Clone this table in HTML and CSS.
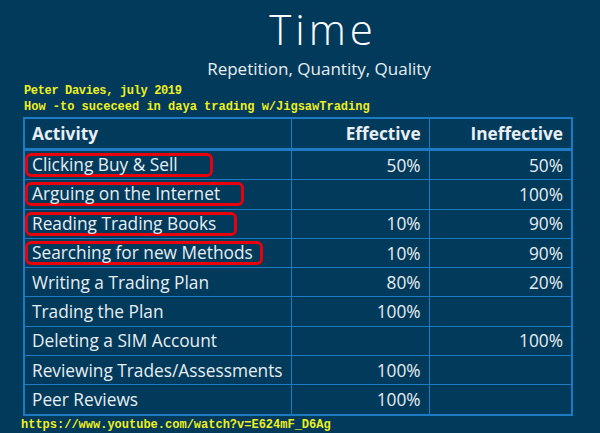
FILE: index.html
```html
<!DOCTYPE html>
<html>
<head>
<meta charset="utf-8">
<link rel="stylesheet" href="styles.css">
</head>
<body>
<div class="slide">
  <header class="heading">
    <h1 class="title">Time</h1>
    <p class="subtitle">Repetition, Quantity, Quality</p>
  </header>
  <div class="credit">
    <p class="credit-line credit-line-1">Peter Davies, july 2019</p>
    <p class="credit-line credit-line-2">How -to suceceed in daya trading w/JigsawTrading</p>
  </div>
  <table class="grid">
    <thead>
      <tr>
        <th class="c-act">Activity</th>
        <th class="c-num c-eff">Effective</th>
        <th class="c-num">Ineffective</th>
      </tr>
    </thead>
    <tbody>
      <tr><td class="c-act"><span class="hl hl-1">Clicking Buy &amp; Sell</span></td><td class="c-num c-eff">50%</td><td class="c-num">50%</td></tr>
      <tr><td class="c-act"><span class="hl hl-2">Arguing on the Internet</span></td><td class="c-num c-eff"></td><td class="c-num">100%</td></tr>
      <tr><td class="c-act"><span class="hl hl-3">Reading Trading Books</span></td><td class="c-num c-eff">10%</td><td class="c-num">90%</td></tr>
      <tr><td class="c-act"><span class="hl hl-4">Searching for new Methods</span></td><td class="c-num c-eff">10%</td><td class="c-num">90%</td></tr>
      <tr><td class="c-act">Writing a Trading Plan</td><td class="c-num c-eff">80%</td><td class="c-num">20%</td></tr>
      <tr><td class="c-act">Trading the Plan</td><td class="c-num c-eff">100%</td><td class="c-num"></td></tr>
      <tr><td class="c-act">Deleting a SIM Account</td><td class="c-num c-eff"></td><td class="c-num">100%</td></tr>
      <tr><td class="c-act">Reviewing Trades/Assessments</td><td class="c-num c-eff">100%</td><td class="c-num"></td></tr>
      <tr><td class="c-act">Peer Reviews</td><td class="c-num c-eff">100%</td><td class="c-num"></td></tr>
    </tbody>
  </table>
  <p class="source">https://www.youtube.com/watch?v=E624mF_D6Ag</p>
</div>
</body>
</html>
```

FILE: styles.css
```css
html, body {
  margin: 0;
  padding: 0;
  background: #023a5b;
}

.slide {
  width: 600px;
  height: 433px;
  overflow: hidden;
  background: #023a5b;
  color: #e8eef2;
  font-family: "Open Sans", "Noto Sans", sans-serif;
}

.heading {
  padding-left: 46px;
  text-align: center;
}

.title {
  margin: 0;
  padding: 0;
  font-size: 42px;
  font-weight: 300;
  line-height: 58px;
  letter-spacing: 4px;
  color: #ffffff;
}

.subtitle {
  margin: 0;
  padding-right: 8px;
  font-size: 17px;
  line-height: 22px;
  font-weight: 400;
  color: #e8eef2;
}

.credit {
  padding-left: 24px;
  padding-top: 3px;
}

.credit-line {
  margin: 0;
  font-family: "Liberation Mono", "Courier New", monospace;
  font-weight: bold;
  color: #f0f01e;
  font-size: 12px;
  line-height: 16px;
}

.credit-line-1 {
  letter-spacing: -0.35px;
}

.grid {
  margin-left: 23px;
  margin-top: 2px;
  width: 550px;
  border-collapse: collapse;
  border: 2px solid #1c7bc2;
  font-size: 17.3px;
}

.grid th,
.grid td {
  border: 1px solid #1c7bc2;
  padding: 0 8px 0 7px;
  height: 28.3px;
  vertical-align: middle;
  white-space: nowrap;
}

.grid th {
  height: 29px;
  font-weight: 700;
  border-bottom: 3px solid #1c7bc2;
}

.c-act {
  text-align: left;
  width: 250px;
}

.c-num {
  text-align: right;
}

.c-eff {
  width: 122px;
}

.hl {
  display: inline-block;
  margin-left: -7px;
  padding: 0 0 0 4px;
  border: 3px solid #e8000c;
  border-radius: 6px;
  line-height: 18px;
  box-sizing: border-box;
}

.hl-1 { width: 188px; }
.hl-2 { width: 219px; }
.hl-3 { width: 212px; }
.hl-4 { width: 238px; }

.source {
  margin: 2px 0 0 0;
  padding-left: 21px;
  font-family: "Liberation Mono", "Courier New", monospace;
  font-weight: bold;
  color: #f0f01e;
  font-size: 12px;
  line-height: 14px;
}
```
